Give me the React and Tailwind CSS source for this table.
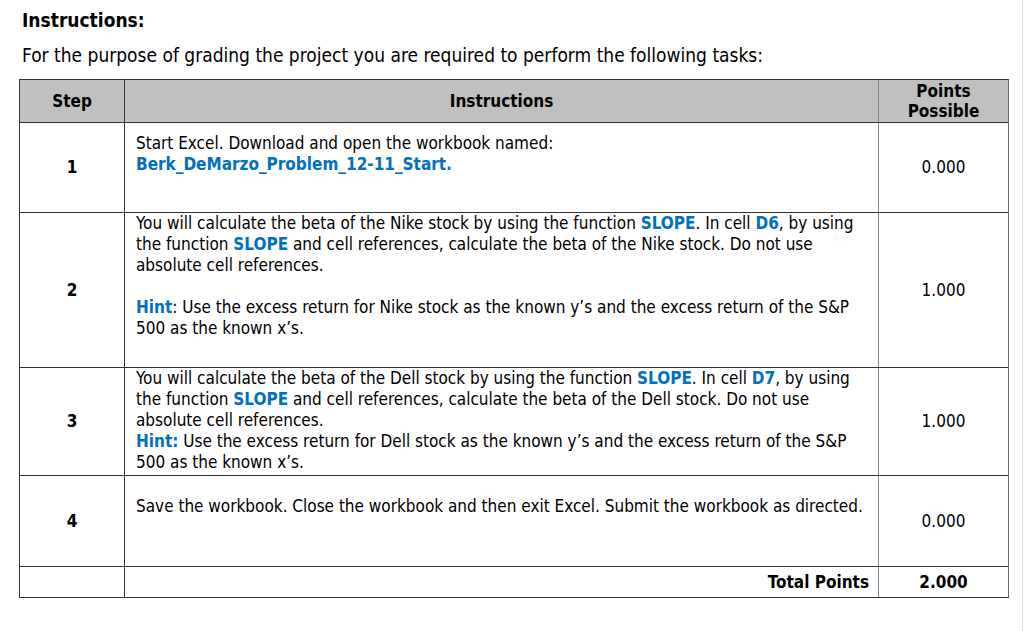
const font = { fontFamily: '"DejaVu Sans Condensed", "DejaVu Sans", sans-serif' };

const Blue = ({ children }) => (
  <span className="font-bold text-[#0070c0]">{children}</span>
);

const rows = [
  {
    step: '1',
    points: '0.000',
    h: 'h-[90px]',
    pad: 'pt-[10px]',
    body: (
      <>
        <div>Start Excel. Download and open the workbook named:</div>
        <div>
          <Blue>Berk_DeMarzo_Problem_12-11_Start.</Blue>
        </div>
      </>
    ),
  },
  {
    step: '2',
    points: '1.000',
    h: 'h-[155px]',
    pad: 'pt-[0px]',
    body: (
      <>
        <div className="whitespace-nowrap">
          You will calculate the beta of the Nike stock by using the function <Blue>SLOPE</Blue>. In cell{' '}
          <Blue>D6</Blue>, by using
          <br />
          the function <Blue>SLOPE</Blue> and cell references, calculate the beta of the Nike stock. Do not use
          <br />
          absolute cell references.
        </div>
        <div className="h-[21px]" />
        <div className="whitespace-nowrap">
          <Blue>Hint</Blue>: Use the excess return for Nike stock as the known y’s and the excess return of the S&amp;P
          <br />
          500 as the known x’s.
        </div>
      </>
    ),
  },
  {
    step: '3',
    points: '1.000',
    h: 'h-[108px]',
    pad: 'pt-[0px]',
    body: (
      <>
        <div className="whitespace-nowrap">
          You will calculate the beta of the Dell stock by using the function <Blue>SLOPE</Blue>. In cell{' '}
          <Blue>D7</Blue>, by using
          <br />
          the function <Blue>SLOPE</Blue> and cell references, calculate the beta of the Dell stock. Do not use
          <br />
          absolute cell references.
        </div>
        <div className="whitespace-nowrap">
          <Blue>Hint:</Blue> Use the excess return for Dell stock as the known y’s and the excess return of the S&amp;P
          <br />
          500 as the known x’s.
        </div>
      </>
    ),
  },
  {
    step: '4',
    points: '0.000',
    h: 'h-[91px]',
    pad: 'pt-[20px]',
    body: (
      <div className="whitespace-nowrap">
        Save the workbook. Close the workbook and then exit Excel. Submit the workbook as directed.
      </div>
    ),
  },
];

export default function App() {
  return (
    <div className="min-h-[631px] w-[1023px] border-r border-[#dcdcdc] bg-white text-black" style={font}>
      <div className="pl-[22px] pt-[8px] text-[19px] font-bold leading-[24px]">Instructions:</div>
      <div className="pl-[22px] pt-[11px] text-[19px] leading-[24px]">
        For the purpose of grading the project you are required to perform the following tasks:
      </div>

      <div className="ml-[19px] mt-[12px] w-[990px] border border-[#333] border-r-[#666] text-[17px] leading-[21px]">
        <div className="grid h-[42px] grid-cols-[104px_754px_130px] bg-[#c0c0c0] font-bold">
          <div className="flex items-center justify-center">Step</div>
          <div className="flex items-center justify-center border-l border-[#333]">Instructions</div>
          <div className="flex flex-col items-center justify-center border-l border-[#888] leading-[20px]">
            <span>Points</span>
            <span>Possible</span>
          </div>
        </div>

        {rows.map((r) => (
          <div key={r.step} className={`grid grid-cols-[104px_754px_130px] border-t border-[#333] ${r.h}`}>
            <div className="flex items-center justify-center font-bold">{r.step}</div>
            <div className={`border-l border-[#333] pl-[11px] pr-[10px] ${r.pad}`}>{r.body}</div>
            <div className="flex items-center justify-center border-l border-[#888]">{r.points}</div>
          </div>
        ))}

        <div className="grid h-[31px] grid-cols-[104px_754px_130px] border-t border-[#333] font-bold">
          <div />
          <div className="flex items-center justify-end border-l border-[#333] pr-[9px]">Total Points</div>
          <div className="flex items-center justify-center border-l border-[#888]">2.000</div>
        </div>
      </div>
    </div>
  );
}
